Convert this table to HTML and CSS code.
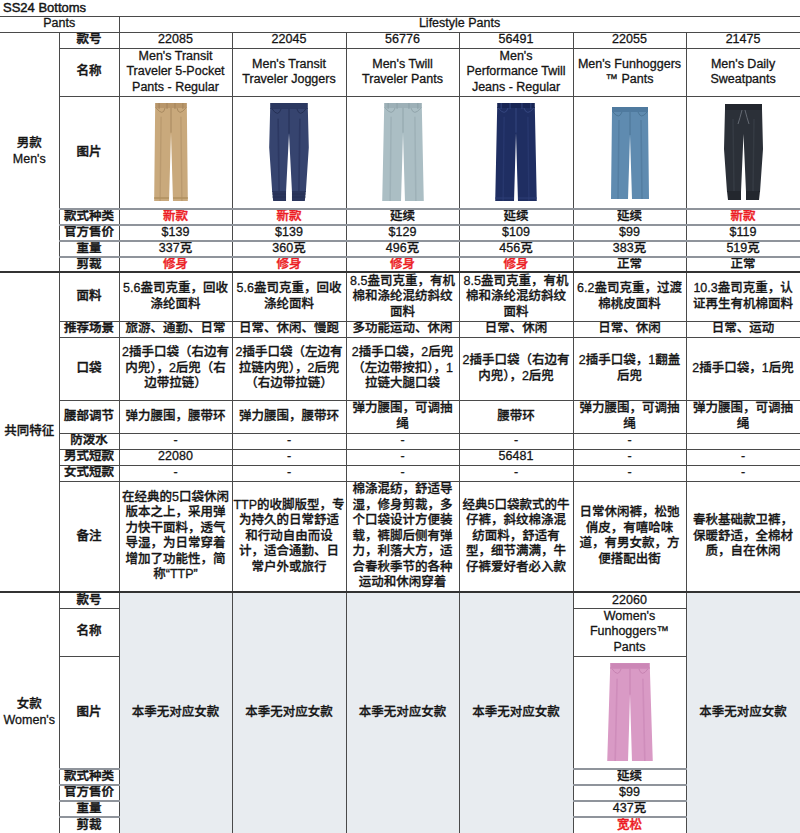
FILE: index.html
```
<!DOCTYPE html>
<html lang="zh-CN">
<head>
<meta charset="utf-8">
<title>SS24 Bottoms</title>
<link rel="stylesheet" href="styles.css">
</head>
<body>
<table class="sheet">
<colgroup>
<col class="c59"><col class="c60"><col class="c113"><col class="c114"><col class="c113"><col class="c114"><col class="c113"><col class="c114">
</colgroup>
<tr class="r16"><td colspan="8" class="title">SS24 Bottoms</td></tr>
<tr class="r16"><td colspan="2" class="hdr first">Pants</td><td colspan="6" class="hdr">Lifestyle Pants</td></tr>

<tr class="r16"><td rowspan="7" class="sec first">男款<br>Men's</td><td class="lbl">款号</td><td>22085</td><td>22045</td><td>56776</td><td>56491</td><td>22055</td><td>21475</td></tr>
<tr class="r48"><td class="lbl">名称</td><td>Men's Transit<br>Traveler 5-Pocket<br>Pants - Regular</td><td>Men's Transit<br>Traveler Joggers</td><td>Men's Twill<br>Traveler Pants</td><td>Men's<br>Performance Twill<br>Jeans - Regular</td><td>Men's Funhoggers<br>™ Pants</td><td>Men's Daily<br>Sweatpants</td></tr>
<tr class="r113"><td class="lbl">图片</td>
<td class="pic"><svg class="pants p-khaki" width="34" height="99" viewBox="0 0 34 100"><path d="M1 4H33L34 99H19L17 30L15 99H0Z" fill="#c9a97c"/><rect x="1" y="0" width="32" height="5" fill="#b8966a"/><path d="M17 5V30M2 5Q9 14 11 5M32 5Q25 14 23 5" stroke="#9f8058" stroke-width="0.8" fill="none"/><path d="M7 14L6 99M27 14L28 99" stroke="#a98a61" stroke-width="1.4" opacity="0.45"/><path d="M5 0V6M13 0V6M21 0V6M29 0V6" stroke="#a3845c" stroke-width="1"/><path d="M0 96H15M19 96H34" stroke="#b0905f" stroke-width="1.5"/></svg></td>
<td class="pic"><svg class="pants" width="42" height="99" viewBox="0 0 42 100"><path d="M2 5H40L41 45L38 90H24L21 31L18 90H4L1 45Z" fill="#36446f"/><rect x="2" y="0" width="38" height="6" fill="#2b3860"/><path d="M4 89H18V99H5ZM24 89H38L37 99H24Z" fill="#2a355c"/><path d="M21 6V31M4 6Q10 15 13 6M38 6Q32 15 29 6" stroke="#232e52" stroke-width="0.9" fill="none"/><path d="M10 16L11 89M32 16L31 89" stroke="#26315a" stroke-width="1.6" opacity="0.6"/><path d="M4 92H18M4 95H18M24 92H38M24 95H38" stroke="#222b4c" stroke-width="0.5"/></svg></td>
<td class="pic"><svg class="pants" width="42" height="99" viewBox="0 0 42 100"><path d="M2 4H40L42 99H23L21 30L19 99H0Z" fill="#abbec4"/><rect x="2" y="0" width="38" height="5" fill="#9db0b7"/><path d="M21 5V30M3 5Q10 14 13 5M39 5Q32 14 29 5" stroke="#8a9da4" stroke-width="0.8" fill="none"/><path d="M9 14L8 99M33 14L34 99" stroke="#93a6ad" stroke-width="1.5" opacity="0.5"/><path d="M6 0V6M15 0V6M27 0V6M36 0V6" stroke="#8ea1a8" stroke-width="1"/></svg></td>
<td class="pic"><svg class="pants" width="42" height="99" viewBox="0 0 42 100"><path d="M2 4H40L42 99H23L21 30L19 99H0Z" fill="#1f2e62"/><rect x="2" y="0" width="38" height="5" fill="#182554"/><path d="M21 5V30M3 5Q10 14 13 5M39 5Q32 14 29 5" stroke="#3a4c86" stroke-width="0.8" fill="none"/><path d="M9 14L8 99M33 14L34 99" stroke="#2b3b73" stroke-width="1.5" opacity="0.7"/><path d="M6 0V6M15 0V6M27 0V6M36 0V6" stroke="#33467f" stroke-width="1"/><path d="M0 96H19M23 96H42" stroke="#2e3f78" stroke-width="1"/></svg></td>
<td class="pic"><svg class="pants p-fun" width="38" height="93" viewBox="0 0 38 93"><path d="M1 4H37L38 92H21L19 28L17 92H0Z" fill="#5f8bb0"/><rect x="1" y="0" width="36" height="5" fill="#4f7a9f"/><path d="M19 5V28M2 5Q8 13 11 5M36 5Q30 13 27 5" stroke="#46708f" stroke-width="0.8" fill="none"/><path d="M8 13L7 92M30 13L31 92" stroke="#4c7597" stroke-width="1.5" opacity="0.55"/></svg></td>
<td class="pic"><svg class="pants" width="41" height="97" viewBox="0 0 41 97"><path d="M2 5H39L40 45L37 88H23L20.5 30L18 88H4L1 45Z" fill="#2b3038"/><rect x="2" y="0" width="37" height="6" fill="#22262d"/><path d="M4 87H18V96H5ZM23 87H37L36 96H23Z" fill="#23272e"/><path d="M19 6Q17 14 15 20M22 6Q24 14 26 20" stroke="#6b7079" stroke-width="0.9" fill="none"/><path d="M10 15L11 87M31 15L30 87" stroke="#3a4049" stroke-width="1.5" opacity="0.7"/></svg></td>
</tr>
<tr class="r16 g"><td class="lbl">款式种类</td><td class="red">新款</td><td class="red">新款</td><td>延续</td><td>延续</td><td>延续</td><td class="red">新款</td></tr>
<tr class="r16 g"><td class="lbl">官方售价</td><td>$139</td><td>$139</td><td>$129</td><td>$109</td><td>$99</td><td>$119</td></tr>
<tr class="r16 g"><td class="lbl">重量</td><td>337克</td><td>360克</td><td>496克</td><td>456克</td><td>383克</td><td>519克</td></tr>
<tr class="r15 g"><td class="lbl">剪裁</td><td class="red">修身</td><td class="red">修身</td><td class="red">修身</td><td class="red">修身</td><td>正常</td><td>正常</td></tr>

<tr class="r49 sep"><td rowspan="8" class="sec first">共同特征</td><td class="lbl">面料</td><td>5.6盎司克重，回收<br>涤纶面料</td><td>5.6盎司克重，回收<br>涤纶面料</td><td>8.5盎司克重，有机<br>棉和涤纶混纺斜纹<br>面料</td><td>8.5盎司克重，有机<br>棉和涤纶混纺斜纹<br>面料</td><td>6.2盎司克重，过渡<br>棉桃皮面料</td><td>10.3盎司克重，认<br>证再生有机棉面料</td></tr>
<tr class="r16"><td class="lbl">推荐场景</td><td>旅游、通勤、日常</td><td>日常、休闲、慢跑</td><td>多功能运动、休闲</td><td>日常、休闲</td><td>日常、休闲</td><td>日常、运动</td></tr>
<tr class="r63"><td class="lbl">口袋</td><td>2插手口袋（右边有<br>内兜），2后兜（右<br>边带拉链）</td><td>2插手口袋（左边有<br>拉链内兜），2后兜<br>（右边带拉链）</td><td>2插手口袋，2后兜<br>（左边带按扣），1<br>拉链大腿口袋</td><td>2插手口袋（右边有<br>内兜），2后兜</td><td>2插手口袋，1翻盖<br>后兜</td><td>2插手口袋，1后兜</td></tr>
<tr class="r33"><td class="lbl">腰部调节</td><td>弹力腰围，腰带环</td><td>弹力腰围，腰带环</td><td>弹力腰围，可调抽<br>绳</td><td>腰带环</td><td>弹力腰围，可调抽<br>绳</td><td>弹力腰围，可调抽<br>绳</td></tr>
<tr class="r16"><td class="lbl">防泼水</td><td>-</td><td>-</td><td>-</td><td>-</td><td>-</td><td></td></tr>
<tr class="r16"><td class="lbl">男式短款</td><td>22080</td><td>-</td><td>-</td><td>56481</td><td>-</td><td>-</td></tr>
<tr class="r16"><td class="lbl">女式短款</td><td>-</td><td>-</td><td>-</td><td>-</td><td>-</td><td>-</td></tr>
<tr class="r111"><td class="lbl">备注</td><td>在经典的5口袋休闲<br>版本之上，采用弹<br>力快干面料，透气<br>导湿，为日常穿着<br>增加了功能性，简<br>称“TTP”</td><td>TTP的收脚版型，专<br>为持久的日常舒适<br>和行动自由而设<br>计，适合通勤、日<br>常户外或旅行</td><td>棉涤混纺，舒适导<br>湿，修身剪裁，多<br>个口袋设计方便装<br>载，裤脚后侧有弹<br>力，利落大方，适<br>合春秋季节的各种<br>运动和休闲穿着</td><td>经典5口袋款式的牛<br>仔裤，斜纹棉涤混<br>纺面料，舒适有<br>型，细节满满，牛<br>仔裤爱好者必入款</td><td>日常休闲裤，松弛<br>俏皮，有嘻哈味<br>道，有男女款，方<br>便搭配出街</td><td>春秋基础款卫裤，<br>保暖舒适，全棉材<br>质，自在休闲</td></tr>

<tr class="r16 sep"><td rowspan="7" class="sec first">女款<br>Women's</td><td class="lbl">款号</td><td rowspan="7" class="none">本季无对应女款</td><td rowspan="7" class="none">本季无对应女款</td><td rowspan="7" class="none">本季无对应女款</td><td rowspan="7" class="none">本季无对应女款</td><td>22060</td><td rowspan="7" class="none">本季无对应女款</td></tr>
<tr class="r48"><td class="lbl">名称</td><td>Women's<br>Funhoggers™<br>Pants</td></tr>
<tr class="r113"><td class="lbl">图片</td><td class="pic"><svg class="pants" width="46" height="99" viewBox="0 0 46 100"><path d="M3 4H43L46 99H25L23 32L21 99H0Z" fill="#d99ac5"/><rect x="3" y="0" width="40" height="6" fill="#cf8bba"/><path d="M23 6V32M5 6Q11 15 14 6M41 6Q35 15 32 6" stroke="#c27dad" stroke-width="0.8" fill="none"/><path d="M10 16L8 99M36 16L38 99" stroke="#c985b6" stroke-width="1.6" opacity="0.6"/><path d="M4 2H42M4 4H42" stroke="#c07aa9" stroke-width="0.4"/></svg></td></tr>
<tr class="r16 g"><td class="lbl">款式种类</td><td>延续</td></tr>
<tr class="r16 g"><td class="lbl">官方售价</td><td>$99</td></tr>
<tr class="r16 g"><td class="lbl">重量</td><td>437克</td></tr>
<tr class="r16 g"><td class="lbl">剪裁</td><td class="red">宽松</td></tr>
</table>
</body>
</html>
```
FILE: styles.css
```
html, body {
  margin: 0;
  padding: 0;
  background: #ffffff;
}
body {
  font-family: "Liberation Sans", "Noto Sans CJK SC", sans-serif;
  font-size: 12.5px;
  font-weight: 500;
  color: #151515;
  -webkit-text-stroke: 0.3px #151515;
}
.sheet {
  width: 800px;
  border-collapse: collapse;
  table-layout: fixed;
}
.c59 { width: 59px; }
.c60 { width: 60px; }
.c113 { width: 113px; }
.c114 { width: 114px; }
.sheet td {
  border: 1px solid #4a4a4a;
  padding: 0;
  text-align: center;
  vertical-align: middle;
  line-height: 15.5px;
  white-space: nowrap;
  overflow: hidden;
}
.sheet td.first { border-left: none; }
.r15 { height: 15px; }
.r16 { height: 16px; }
.r33 { height: 33px; }
.r48 { height: 48px; }
.r49 { height: 49px; }
.r63 { height: 63px; }
.r111 { height: 111px; }
.r113 { height: 113px; }
.r16 > td { line-height: 13.5px; }
.r15 > td { line-height: 12.5px; }
.r16 > td.sec, .r49 > td.sec { line-height: 15.5px; }
.r16 > td.none { line-height: 15.5px; }
.g > td { border-top: 2px solid #8f949b; }
.sep > td { border-top: 2px solid #333333; }
.sheet td.title {
  border-top: none;
  border-left: none;
  border-right: none;
  text-align: left;
  padding-left: 3px;
  font-size: 13px;
  -webkit-text-stroke: 0.45px #151515;
}
.hdr { }
.lbl { -webkit-text-stroke: 0.45px #151515; }
.sec { }
.red { color: #ec1c24; -webkit-text-stroke: 0.4px #ec1c24; }
.none { background: #e8ecf0; }
.pic { line-height: 0; }
.pants { display: block; margin: 0 auto; -webkit-text-stroke: 0; }
.p-khaki { margin-left: 34px; }
.p-fun { margin-top: 2px; }
```
